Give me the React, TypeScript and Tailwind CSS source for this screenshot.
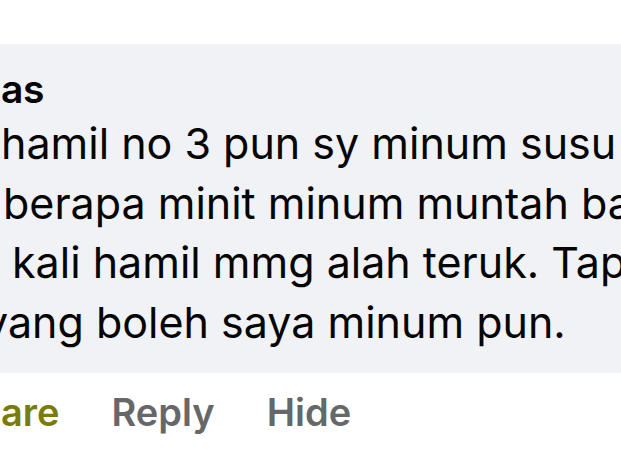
export default function App() {
  const lines = [
    { text: "hamil no 3 pun sy minum susu", ml: "ml-[1px]" },
    { text: "berapa minit minum muntah balik", ml: "ml-[3px]" },
    { text: "kali hamil mmg alah teruk. Tapi", ml: "ml-[12px]" },
    { text: "yang boleh saya minum pun.", ml: "-ml-[16px]" },
  ];

  return (
    <div className="h-[466px] w-[621px] overflow-hidden bg-white font-['Inter',sans-serif] text-[#050505]">
      <div className="h-[44px]" />
      <div className="h-[329px] overflow-hidden bg-[#f0f2f5] pt-[20px]">
        <div className="ml-[1px] text-[39px] font-semibold leading-[50px] tracking-[-0.5px]">as</div>
        {lines.map((l) => (
          <div
            key={l.text}
            className={`whitespace-nowrap text-[43px] leading-[59.5px] ${l.ml}`}
          >
            {l.text}
          </div>
        ))}
      </div>
      <div className="flex items-center gap-[52px] pt-[14px] text-[38px] font-semibold leading-[50px] text-[#666769]">
        <span className="ml-[1px] text-[#7d7a0c]">are</span>
        <span>Reply</span>
        <span>Hide</span>
      </div>
    </div>
  );
}
